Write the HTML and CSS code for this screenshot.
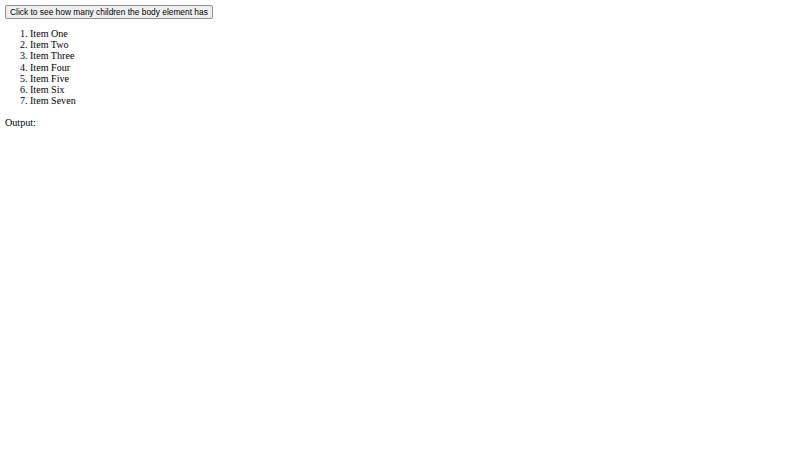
FILE: index.html
```html
<!DOCTYPE html>
<html>
<head>
<meta charset="utf-8">
<link rel="stylesheet" href="styles.css">
</head>
<body>
<button class="btn" type="button">Click to see how many children the body element has</button>
<ol class="items">
<li>Item One</li>
<li>Item Two</li>
<li>Item Three</li>
<li>Item Four</li>
<li>Item Five</li>
<li>Item Six</li>
<li>Item Seven</li>
</ol>
<p class="output">Output:</p>
</body>
</html>
```
FILE: styles.css
```css
html, body {
  background: #ffffff;
}
body {
  margin: 5px;
  font-family: "Liberation Serif", "Times New Roman", serif;
  font-size: 10.1px;
  line-height: 11.2px;
  color: #000000;
}
.btn {
  font-family: "Liberation Sans", Arial, sans-serif;
  font-size: 8.4px;
  line-height: normal;
  padding: 1px 4px;
  margin: 0;
  border: 1px solid #8f8f8f;
  border-radius: 2px;
  background: #efefef;
  color: #000000;
}
.items {
  margin: 9px 0 11px;
  padding-left: 25px;
}
.output {
  margin: 11px 0;
}
```
